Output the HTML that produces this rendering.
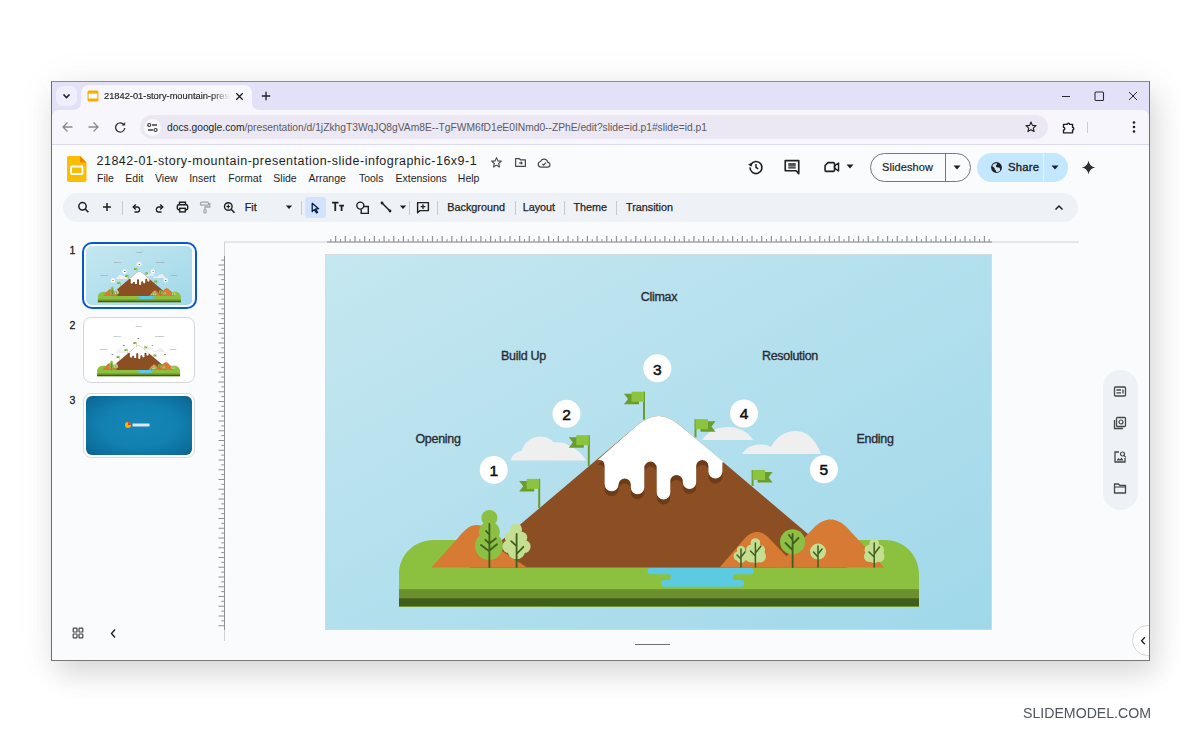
<!DOCTYPE html>
<html><head><meta charset="utf-8">
<style>
*{margin:0;padding:0;box-sizing:border-box}
html,body{width:1200px;height:743px;overflow:hidden;background:#fff;font-family:"Liberation Sans",sans-serif;color:#1f1f1f}
.a{position:absolute}
#win{position:absolute;left:51px;top:81px;width:1099px;height:580px;border:1px solid #8c8c8c;border-left-color:#6c6c6c;border-right-color:#707070;border-bottom-color:#777;background:#f9fbfd;box-shadow:6px 14px 26px rgba(0,0,0,0.11),2px 4px 40px rgba(0,0,0,0.07)}
#tabs{position:absolute;left:0;top:0;width:1097px;height:36px;background:#e2e1f7}
#tb{position:absolute;left:0;top:28px;width:1097px;height:35px;border-top-left-radius:7px;border-top-right-radius:7px;background:#f8f6fd;border-bottom:1px solid #dcd9ea}
.ic{position:absolute}
svg{display:block}
.menu span{position:absolute;top:0;font-size:10.5px;color:#1f1f1f}
.tbar{position:absolute;left:12px;top:112px;width:1015px;height:28px;background:#edf2fa;border-radius:14px}
.tt{position:absolute;font-size:10.5px;color:#444746}
.sep{position:absolute;width:1px;height:14px;background:#c7c9cc}
</style></head><body>
<div id="win">
  <div id="tabs"></div>
  <div id="tb"></div>
</div>
<!-- tab strip -->
<div class="a" style="left:56px;top:86px;width:21px;height:20px;border-radius:7px;background:#efeefc"></div>
<svg class="a" style="left:61px;top:91px" width="11" height="10" viewBox="0 0 11 10"><path d="M2.5,3.5 L5.5,6.5 L8.5,3.5" stroke="#1f1f1f" stroke-width="1.6" fill="none"/></svg>
<div class="a" style="left:81px;top:85px;width:171px;height:25.5px;background:#f8f6fd;border-radius:8px 8px 0 0"></div>
<svg class="a" style="left:73px;top:102px" width="8" height="8" viewBox="0 0 8 8"><path d="M0,8 Q8,8 8,0 V8 Z" fill="#f8f6fd"/></svg>
<svg class="a" style="left:252px;top:102px" width="8" height="8" viewBox="0 0 8 8"><path d="M8,8 Q0,8 0,0 V8 Z" fill="#f8f6fd"/></svg>
<svg class="a" style="left:87px;top:90px" width="12" height="12" viewBox="0 0 12 12"><rect x="0.5" y="0.5" width="11" height="11" rx="1.5" fill="#f9ab00"/><rect x="1.6" y="3.6" width="8.8" height="4.9" fill="#fff"/></svg>
<div class="a" style="left:104px;top:90px;width:126px;height:14px;overflow:hidden;white-space:nowrap;font-size:9.3px;line-height:13px;color:#1f1f1f;-webkit-text-stroke:0.15px #1f1f1f;-webkit-mask-image:linear-gradient(90deg,#000 85%,transparent)">21842-01-story-mountain-presentation</div>
<svg class="a" style="left:235px;top:92px" width="9" height="9" viewBox="0 0 9 9"><path d="M1.3,1.3 L7.7,7.7 M7.7,1.3 L1.3,7.7" stroke="#1f1f1f" stroke-width="1.3"/></svg>
<svg class="a" style="left:261px;top:91px" width="10" height="10" viewBox="0 0 10 10"><path d="M5,0.8 V9.2 M0.8,5 H9.2" stroke="#1f1f1f" stroke-width="1.3"/></svg>
<svg class="a" style="left:1060px;top:90px" width="12" height="12" viewBox="0 0 12 12"><path d="M2,6.5 H10" stroke="#2a2a2a" stroke-width="1"/></svg>
<svg class="a" style="left:1093px;top:90px" width="12" height="12" viewBox="0 0 12 12"><rect x="2" y="2" width="8.5" height="8.5" rx="1" stroke="#2a2a2a" stroke-width="1.05" fill="none"/></svg>
<svg class="a" style="left:1127px;top:90px" width="12" height="12" viewBox="0 0 12 12"><path d="M2,2 L10,10 M10,2 L2,10" stroke="#2a2a2a" stroke-width="1"/></svg>
<!-- toolbar -->
<svg class="a" style="left:61px;top:121px" width="13" height="12" viewBox="0 0 13 12"><path d="M11.5,6 H2 M6.5,1.5 L2,6 L6.5,10.5" stroke="#8a8891" stroke-width="1.3" fill="none"/></svg>
<svg class="a" style="left:87px;top:121px" width="13" height="12" viewBox="0 0 13 12"><path d="M1.5,6 H11 M6.5,1.5 L11,6 L6.5,10.5" stroke="#8a8891" stroke-width="1.3" fill="none"/></svg>
<svg class="a" style="left:114px;top:121px" width="13" height="12" viewBox="0 0 13 12"><path d="M10.2,4.2 A4.6,4.6 0 1 0 10.8,7" stroke="#3c3b41" stroke-width="1.4" fill="none"/><path d="M7.5,4.6 H11.2 V0.9 Z" fill="#3c3b41"/></svg>
<div class="a" style="left:140px;top:115px;width:908px;height:23.7px;border-radius:12px;background:#ebe8f3"></div>
<div class="a" style="left:144px;top:119px;width:17px;height:17px;border-radius:50%;background:#f9f8fc"></div>
<svg class="a" style="left:146px;top:121px" width="13" height="13" viewBox="0 0 13 13"><path d="M6,4 H11 M2,9 H7" stroke="#3c3b41" stroke-width="1.3"/><circle cx="3.2" cy="4" r="1.5" stroke="#3c3b41" stroke-width="1.2" fill="none"/><circle cx="9.6" cy="9" r="1.5" stroke="#3c3b41" stroke-width="1.2" fill="none"/></svg>
<div class="a" style="left:167px;top:120.5px;font-size:10.25px;line-height:14px;white-space:nowrap;color:#5b5962"><span style="color:#1f1f1f">docs.google.com</span>/presentation/d/1jZkhgT3WqJQ8gVAm8E--TgFWM6fD1eE0INmd0--ZPhE/edit?slide=id.p1#slide=id.p1</div>
<svg class="a" style="left:1024px;top:120px" width="14" height="14" viewBox="0 0 24 24"><path d="M12,3.5 L14.4,9.2 L20.6,9.7 L15.9,13.8 L17.3,19.8 L12,16.6 L6.7,19.8 L8.1,13.8 L3.4,9.7 L9.6,9.2 Z" stroke="#1f1f1f" stroke-width="1.9" fill="none" stroke-linejoin="round"/></svg>
<svg class="a" style="left:1061px;top:120px" width="15" height="15" viewBox="0 0 24 24"><path d="M4,7 H9.8 A2,2 0 0 1 13.8,7 H18.5 V11.8 A2,2 0 0 1 18.5,15.8 V20.5 H4 V16 A2.1,2.1 0 0 0 4,11.8 Z" stroke="#1f1f1f" stroke-width="2.2" fill="none" stroke-linejoin="round"/></svg>
<div class="a" style="left:1087px;top:122px;width:1px;height:11px;background:#c9c6f0"></div>
<svg class="a" style="left:1131px;top:120px" width="6" height="14" viewBox="0 0 6 14"><circle cx="3" cy="2.5" r="1.3" fill="#1f1f1f"/><circle cx="3" cy="7" r="1.3" fill="#1f1f1f"/><circle cx="3" cy="11.5" r="1.3" fill="#1f1f1f"/></svg>

<!-- app header -->
<svg class="a" style="left:67px;top:156px" width="20" height="26" viewBox="0 0 20 26"><path d="M2,0 H13 L19.5,6.5 V24 A2,2 0 0 1 17.5,26 H2 A2,2 0 0 1 0,24 V2 A2,2 0 0 1 2,0 Z" fill="#fbbc04"/><path d="M13,0 L19.5,6.5 H13 Z" fill="#ea8600"/><rect x="4" y="10.5" width="11.5" height="7.5" rx="0.8" fill="none" stroke="#fff" stroke-width="1.8"/></svg>
<div class="a" style="left:96.5px;top:153px;font-size:12.5px;line-height:16px;letter-spacing:0.5px;white-space:nowrap;color:#1f1f1f">21842-01-story-mountain-presentation-slide-infographic-16x9-1</div>
<svg class="a" style="left:490px;top:156px" width="13" height="13" viewBox="0 0 24 24"><path d="M12,3 L14.5,9 L21,9.5 L16,13.8 L17.5,20.2 L12,16.8 L6.5,20.2 L8,13.8 L3,9.5 L9.5,9 Z" stroke="#444746" stroke-width="2" fill="none" stroke-linejoin="round"/></svg>
<svg class="a" style="left:513.5px;top:156px" width="13" height="13" viewBox="0 0 24 24"><path d="M3,5 H10 L12,7 H21 V19 H3 Z" stroke="#444746" stroke-width="2.2" fill="none" stroke-linejoin="round"/><path d="M9,13 H15 M12.5,10.5 L15,13 L12.5,15.5" stroke="#444746" stroke-width="2" fill="none"/></svg>
<svg class="a" style="left:537px;top:155.5px" width="14" height="14" viewBox="0 0 24 24"><path d="M7,19 H18 A4,4 0 0 0 18.5,11 A6.5,6.5 0 0 0 6,9.5 A4.8,4.8 0 0 0 7,19 Z" stroke="#444746" stroke-width="2" fill="none"/><path d="M9,13.5 L11.3,15.8 L15.5,11.5" stroke="#444746" stroke-width="2" fill="none"/></svg>
<div class="a menu" style="left:0;top:172px;font-size:10.3px;line-height:13px;color:#1f1f1f">
<span style="left:97px">File</span><span style="left:125.3px">Edit</span><span style="left:155px">View</span><span style="left:189.2px">Insert</span><span style="left:228.3px">Format</span><span style="left:273.3px">Slide</span><span style="left:308.5px">Arrange</span><span style="left:358.9px">Tools</span><span style="left:395.5px">Extensions</span><span style="left:457.8px">Help</span>
</div>
<!-- right header -->
<svg class="a" style="left:747px;top:158px" width="18" height="18" viewBox="0 0 24 24"><path d="M5.2,8.5 A8,8 0 1 1 4,12.5" stroke="#1f1f1f" stroke-width="2.2" fill="none"/><path d="M1.5,8.8 L6,11.5 L7.5,6 Z" fill="#1f1f1f"/><path d="M12,8 V12.5 L15,14.5" stroke="#1f1f1f" stroke-width="2" fill="none"/></svg>
<svg class="a" style="left:783px;top:158px" width="18" height="18" viewBox="0 0 24 24"><path d="M3,3.5 H21 V21 L17.5,17 H3 Z" stroke="#1f1f1f" stroke-width="2.2" fill="none" stroke-linejoin="round"/><path d="M7,8 H17 M7,10.6 H17 M7,13.2 H17" stroke="#1f1f1f" stroke-width="1.7"/></svg>
<svg class="a" style="left:823px;top:159px" width="18" height="16" viewBox="0 0 24 22"><path d="M6.5,5 H14 A1.5,1.5 0 0 1 15.5,6.5 V15.5 A1.5,1.5 0 0 1 14,17 H4 A1.5,1.5 0 0 1 2.5,15.5 V9 Z" stroke="#1f1f1f" stroke-width="2.2" fill="none" stroke-linejoin="round"/><path d="M15.5,9.5 L21,5.5 V16.5 L15.5,12.5 Z" stroke="#1f1f1f" stroke-width="2" fill="none" stroke-linejoin="round"/></svg>
<svg class="a" style="left:846px;top:164px" width="8" height="5" viewBox="0 0 8 5"><path d="M0.5,0.5 H7.5 L4,4.5 Z" fill="#1f1f1f"/></svg>
<div class="a" style="left:870px;top:153px;width:101px;height:29px;border:1px solid #747775;border-radius:15px"></div>
<div class="a" style="left:944.5px;top:153px;width:1px;height:29px;background:#747775"></div>
<div class="a" style="left:882px;top:160px;font-size:11px;line-height:14px;color:#1f1f1f;letter-spacing:0.1px;-webkit-text-stroke:0.2px #1f1f1f">Slideshow</div>
<svg class="a" style="left:953px;top:165px" width="8" height="5" viewBox="0 0 8 5"><path d="M0.5,0.5 H7.5 L4,4.5 Z" fill="#1f1f1f"/></svg>
<div class="a" style="left:977px;top:153px;width:91px;height:29px;background:#c2e7ff;border-radius:15px"></div>
<div class="a" style="left:1043px;top:153px;width:1px;height:29px;background:#e6f4ff"></div>
<svg class="a" style="left:990px;top:161px" width="13" height="13" viewBox="0 0 24 24"><circle cx="12" cy="12" r="10" fill="#1f1f1f"/><path d="M11,20 V17.5 L8.5,15 V13 L4,9 A8,8 0 0 1 13,4.2 V6.5 L11,8 V10.5 L14,12 H17 L18.5,14.5 V18 A8,8 0 0 1 11,20 Z" fill="#c2e7ff"/></svg>
<div class="a" style="left:1008px;top:159.5px;font-size:11.3px;line-height:14px;color:#1f1f1f;letter-spacing:0.2px;-webkit-text-stroke:0.35px #1f1f1f">Share</div>
<svg class="a" style="left:1051px;top:165px" width="8" height="5" viewBox="0 0 8 5"><path d="M0.5,0.5 H7.5 L4,4.5 Z" fill="#1f1f1f"/></svg>
<svg class="a" style="left:1080px;top:159px" width="17" height="17" viewBox="0 0 24 24"><path d="M12,2.5 C13,8 16,11 21.5,12 C16,13 13,16 12,21.5 C11,16 8,13 2.5,12 C8,11 11,8 12,2.5 Z" fill="#2d2f33"/></svg>
<!-- toolbar -->
<div class="a" style="left:63px;top:193px;width:1015px;height:29px;background:#eef2f7;border-radius:14.5px"></div>

<svg class="a" style="left:77px;top:201px" width="13" height="13" viewBox="0 0 13 13"><circle cx="5.5" cy="5.3" r="3.7" stroke="#1f1f1f" stroke-width="1.5" fill="none"/><path d="M8.2,8 L11.4,11.2" stroke="#1f1f1f" stroke-width="1.6"/></svg>
<svg class="a" style="left:101px;top:201px" width="12" height="12" viewBox="0 0 12 12"><path d="M6,2 V10 M2,6 H10" stroke="#1f1f1f" stroke-width="1.5"/></svg>
<div class="sep" style="left:122px;top:201px"></div>
<svg class="a" style="left:131px;top:202px" width="11" height="11" viewBox="0 0 11 11"><path d="M2.5,5 H6.8 A2.6,2.6 0 0 1 6.8,10 H3.5" stroke="#1f1f1f" stroke-width="1.4" fill="none"/><path d="M4.8,2.5 L2.2,5 L4.8,7.5" stroke="#1f1f1f" stroke-width="1.4" fill="none"/></svg>
<svg class="a" style="left:154px;top:202px" width="11" height="11" viewBox="0 0 11 11"><path d="M8.5,5 H4.2 A2.6,2.6 0 0 0 4.2,10 H7.5" stroke="#1f1f1f" stroke-width="1.4" fill="none"/><path d="M6.2,2.5 L8.8,5 L6.2,7.5" stroke="#1f1f1f" stroke-width="1.4" fill="none"/></svg>
<svg class="a" style="left:176px;top:201px" width="13" height="12" viewBox="0 0 13 12"><path d="M3.5,3.5 V1.2 H9.5 V3.5" stroke="#1f1f1f" stroke-width="1.4" fill="none"/><rect x="1.3" y="3.7" width="10.4" height="5" rx="1.5" stroke="#1f1f1f" stroke-width="1.4" fill="none"/><rect x="3.7" y="7.3" width="5.6" height="3.6" stroke="#1f1f1f" stroke-width="1.4" fill="#edf2fa"/></svg>
<svg class="a" style="left:199px;top:200.5px" width="12" height="13" viewBox="0 0 12 13"><rect x="1.5" y="1.2" width="8" height="3" rx="1" stroke="#a3a5a8" stroke-width="1.3" fill="none"/><path d="M9.5,2.7 H10.8 V6 H6 V8.5" stroke="#a3a5a8" stroke-width="1.3" fill="none"/><rect x="4.9" y="8.5" width="2.2" height="3.6" rx="1" stroke="#a3a5a8" stroke-width="1.2" fill="none"/></svg>
<svg class="a" style="left:222.5px;top:200.5px" width="13" height="13" viewBox="0 0 13 13"><circle cx="5.3" cy="5.5" r="3.8" stroke="#1f1f1f" stroke-width="1.4" fill="none"/><path d="M8.1,8.3 L11.5,11.7" stroke="#1f1f1f" stroke-width="1.6"/><path d="M5.3,3.6 V7.4 M3.4,5.5 H7.2" stroke="#1f1f1f" stroke-width="1.2"/></svg>
<div class="a" style="left:244.7px;top:201px;font-size:10.8px;line-height:13px;color:#1f1f1f;-webkit-text-stroke:0.25px #1f1f1f">Fit</div>
<svg class="a" style="left:285px;top:205px" width="8" height="5" viewBox="0 0 8 5"><path d="M0.8,0.5 H7.2 L4,4 Z" fill="#1f1f1f"/></svg>
<div class="sep" style="left:301px;top:201px"></div>
<div class="a" style="left:304.7px;top:196.8px;width:21.6px;height:21px;border-radius:3px;background:#d3e3fd"></div>
<svg class="a" style="left:310px;top:201.5px" width="11" height="12" viewBox="0 0 11 12"><path d="M2.2,1.3 L2.2,9.6 L4.4,7.6 L6.5,11 L7.6,10.3 L5.6,7 L8.6,6.7 Z" stroke="#041e49" stroke-width="1.3" fill="none" stroke-linejoin="round"/></svg>
<svg class="a" style="left:331px;top:201px" width="14" height="11" viewBox="0 0 14 11"><path d="M1,1.6 H7.5 M4.25,1.6 V10 M8.2,4.6 H13 M10.6,4.6 V10" stroke="#1f1f1f" stroke-width="1.8"/></svg>
<svg class="a" style="left:355px;top:201px" width="15" height="14" viewBox="0 0 15 14"><circle cx="5.3" cy="4.6" r="3.5" stroke="#1f1f1f" stroke-width="1.4" fill="none"/><path d="M8.6,5.5 H13.3 V12.4 H6.2 V8.2" stroke="#1f1f1f" stroke-width="1.4" fill="none"/></svg>
<svg class="a" style="left:380px;top:201px" width="12" height="12" viewBox="0 0 12 12"><path d="M2,2 L10,10" stroke="#1f1f1f" stroke-width="1.6"/><circle cx="2" cy="2" r="1.4" fill="#1f1f1f"/><circle cx="10" cy="10" r="1.4" fill="#1f1f1f"/></svg>
<svg class="a" style="left:398.5px;top:205px" width="8" height="5" viewBox="0 0 8 5"><path d="M0.8,0.5 H7.2 L4,4 Z" fill="#1f1f1f"/></svg>
<div class="sep" style="left:409px;top:201px"></div>
<svg class="a" style="left:416px;top:201px" width="14" height="13" viewBox="0 0 14 13"><path d="M1.6,1.6 H12.4 V9.6 H4 L1.6,11.8 Z" stroke="#1f1f1f" stroke-width="1.4" fill="none" stroke-linejoin="round"/><path d="M7,3.3 V8 M4.6,5.6 H9.4" stroke="#1f1f1f" stroke-width="1.3"/></svg>
<div class="sep" style="left:437px;top:201px"></div>
<div class="a" style="left:447.3px;top:201px;font-size:10.8px;line-height:13px;color:#1f1f1f;-webkit-text-stroke:0.25px #1f1f1f">Background</div>
<div class="sep" style="left:515px;top:201px"></div>
<div class="a" style="left:522.7px;top:201px;font-size:10.8px;line-height:13px;color:#1f1f1f;-webkit-text-stroke:0.25px #1f1f1f">Layout</div>
<div class="sep" style="left:563.5px;top:201px"></div>
<div class="a" style="left:573.4px;top:201px;font-size:10.8px;line-height:13px;color:#1f1f1f;-webkit-text-stroke:0.25px #1f1f1f">Theme</div>
<div class="sep" style="left:616px;top:201px"></div>
<div class="a" style="left:626px;top:201px;font-size:10.8px;line-height:13px;color:#1f1f1f;-webkit-text-stroke:0.25px #1f1f1f">Transition</div>
<svg class="a" style="left:1054px;top:204px" width="10" height="7" viewBox="0 0 10 7"><path d="M1.5,5.5 L5,2 L8.5,5.5" stroke="#1f1f1f" stroke-width="1.5" fill="none"/></svg>

<!-- filmstrip -->
<div class="a" style="left:69.5px;top:244px;font-size:10.5px;line-height:13px;color:#1f1f1f;-webkit-text-stroke:0.3px #1f1f1f">1</div>
<div class="a" style="left:69.5px;top:319px;font-size:10.5px;line-height:13px;color:#1f1f1f;-webkit-text-stroke:0.3px #1f1f1f">2</div>
<div class="a" style="left:69.5px;top:394px;font-size:10.5px;line-height:13px;color:#1f1f1f;-webkit-text-stroke:0.3px #1f1f1f">3</div>
<div class="a" style="left:81.5px;top:241.5px;width:115px;height:67.5px;border:2.5px solid #0b57d0;border-radius:10px"></div>
<div class="a" style="left:82.8px;top:317.3px;width:112.4px;height:65.5px;border:1px solid #d5d7da;border-radius:8px;background:#fff"></div>
<div class="a" style="left:83px;top:393px;width:112px;height:64.5px;border:1px solid #dadce0;border-radius:8px;background:#fff"></div>
<div class="a" style="left:85.7px;top:395.7px;width:106.8px;height:59.5px;border-radius:6px;background:radial-gradient(ellipse at 50% 50%,#1486b6 0%,#1181b1 50%,#0d6d9b 85%,#0a5f8a 100%)"></div>
<svg class="a" style="left:124px;top:420px" width="30" height="10" viewBox="0 0 30 10"><circle cx="4" cy="5" r="3" fill="#f5b400"/><path d="M4,2 A3,3 0 0 1 7,5 H4 Z" fill="#e0452f"/><rect x="8.5" y="3.5" width="17" height="3" fill="#dbe8f0"/></svg>
<!-- bottom-left icons -->
<svg class="a" style="left:72px;top:627px" width="12" height="12" viewBox="0 0 12 12"><rect x="1.2" y="1.2" width="3.8" height="3.8" rx="0.6" stroke="#444746" stroke-width="1.2" fill="none"/><rect x="7" y="1.2" width="3.8" height="3.8" rx="0.6" stroke="#444746" stroke-width="1.2" fill="none"/><rect x="1.2" y="7" width="3.8" height="3.8" rx="0.6" stroke="#444746" stroke-width="1.2" fill="none"/><rect x="7" y="7" width="3.8" height="3.8" rx="0.6" stroke="#444746" stroke-width="1.2" fill="none"/></svg>
<svg class="a" style="left:109px;top:628px" width="9" height="11" viewBox="0 0 9 11"><path d="M6,1.5 L2.5,5.5 L6,9.5" stroke="#1f1f1f" stroke-width="1.4" fill="none"/></svg>
<!-- notes handle -->
<div class="a" style="left:635px;top:643.5px;width:35px;height:1px;background:#6f7175"></div>
<!-- side panel -->
<div class="a" style="left:1103px;top:370px;width:35px;height:140px;border-radius:17.5px;background:#eef1f6"></div>
<svg class="a" style="left:1113px;top:385px" width="14" height="13" viewBox="0 0 14 13"><rect x="1.5" y="2" width="11" height="9" rx="1" stroke="#444746" stroke-width="1.3" fill="none"/><path d="M3.5,5 H8 M3.5,7.8 H8 M10,4.5 V8.5" stroke="#444746" stroke-width="1.3"/></svg>
<svg class="a" style="left:1113px;top:416px" width="14" height="14" viewBox="0 0 14 14"><rect x="3.5" y="1.5" width="9" height="9" rx="1" stroke="#444746" stroke-width="1.3" fill="none"/><path d="M1.5,4 V12.5 H10" stroke="#444746" stroke-width="1.3" fill="none"/><circle cx="8" cy="6" r="2" stroke="#444746" stroke-width="1.2" fill="none"/></svg>
<svg class="a" style="left:1113px;top:450px" width="14" height="14" viewBox="0 0 14 14"><path d="M6,2 H2 V12 H12 V8" stroke="#444746" stroke-width="1.3" fill="none"/><path d="M3.5,10.5 L5.5,8 L7,9.5 L8.5,7.5 L10.5,10.5 Z" fill="#444746"/><circle cx="9.5" cy="4" r="2" stroke="#444746" stroke-width="1.2" fill="none"/><path d="M11,5.5 L12.8,7.3" stroke="#444746" stroke-width="1.2"/></svg>
<svg class="a" style="left:1113px;top:482px" width="14" height="13" viewBox="0 0 14 13"><path d="M1.5,2 H5.5 L7,3.5 H12.5 V11 H1.5 Z" stroke="#444746" stroke-width="1.3" fill="none" stroke-linejoin="round"/><path d="M1.5,5 H12.5" stroke="#444746" stroke-width="1.1"/></svg>
<div class="a" style="left:1120px;top:620px;width:29px;height:40px;overflow:hidden"><div class="a" style="left:11.5px;top:4.8px;width:31px;height:31px;border-radius:50%;background:#fff;border:1px solid #d5d7db"></div></div>
<svg class="a" style="left:1138.5px;top:636px" width="8" height="10" viewBox="0 0 8 10"><path d="M5.8,1.3 L2.6,4.8 L5.8,8.3" stroke="#1f1f1f" stroke-width="1.3" fill="none"/></svg>

<svg class="a" style="left:0;top:0" width="1200" height="743" viewBox="0 0 1200 743">
<path d="M224,242 H1079 M224.5,242 V641" stroke="#d0d2d6" stroke-width="1"/>
<path d="M327,242 H992 M224.5,256 V630" stroke="#8e9196" stroke-width="1"/>
<path d="M330.80,239 V242 M340.48,239 V242 M350.17,239 V242 M359.85,239 V242 M369.53,239 V242 M379.22,239 V242 M388.90,239 V242 M398.58,239 V242 M408.26,239 V242 M417.95,239 V242 M427.63,239 V242 M437.31,239 V242 M447.00,239 V242 M456.68,239 V242 M466.36,239 V242 M476.05,239 V242 M485.73,239 V242 M495.41,239 V242 M505.09,239 V242 M514.78,239 V242 M524.46,239 V242 M534.14,239 V242 M543.83,239 V242 M553.51,239 V242 M563.19,239 V242 M572.88,239 V242 M582.56,239 V242 M592.24,239 V242 M601.92,239 V242 M611.61,239 V242 M621.29,239 V242 M630.97,239 V242 M640.66,239 V242 M650.34,239 V242 M660.02,239 V242 M669.70,239 V242 M679.39,239 V242 M689.07,239 V242 M698.75,239 V242 M708.44,239 V242 M718.12,239 V242 M727.80,239 V242 M737.49,239 V242 M747.17,239 V242 M756.85,239 V242 M766.54,239 V242 M776.22,239 V242 M785.90,239 V242 M795.58,239 V242 M805.27,239 V242 M814.95,239 V242 M824.63,239 V242 M834.32,239 V242 M844.00,239 V242 M853.68,239 V242 M863.37,239 V242 M873.05,239 V242 M882.73,239 V242 M892.41,239 V242 M902.10,239 V242 M911.78,239 V242 M921.46,239 V242 M931.15,239 V242 M940.83,239 V242 M950.51,239 V242 M960.19,239 V242 M969.88,239 V242 M979.56,239 V242 M989.24,239 V242 M221.3,260.10 H224.5 M221.3,269.85 H224.5 M221.3,279.60 H224.5 M221.3,289.35 H224.5 M221.3,299.10 H224.5 M221.3,308.85 H224.5 M221.3,318.60 H224.5 M221.3,328.35 H224.5 M221.3,338.10 H224.5 M221.3,347.85 H224.5 M221.3,357.60 H224.5 M221.3,367.35 H224.5 M221.3,377.10 H224.5 M221.3,386.85 H224.5 M221.3,396.60 H224.5 M221.3,406.35 H224.5 M221.3,416.10 H224.5 M221.3,425.85 H224.5 M221.3,435.60 H224.5 M221.3,445.35 H224.5 M221.3,455.10 H224.5 M221.3,464.85 H224.5 M221.3,474.60 H224.5 M221.3,484.35 H224.5 M221.3,494.10 H224.5 M221.3,503.85 H224.5 M221.3,513.60 H224.5 M221.3,523.35 H224.5 M221.3,533.10 H224.5 M221.3,542.85 H224.5 M221.3,552.60 H224.5 M221.3,562.35 H224.5 M221.3,572.10 H224.5 M221.3,581.85 H224.5 M221.3,591.60 H224.5 M221.3,601.35 H224.5 M221.3,611.10 H224.5 M221.3,620.85 H224.5" stroke="#8e9196" stroke-width="1"/>
<path d="M335.64,236 V242 M345.32,236 V242 M355.01,236 V242 M364.69,236 V242 M374.37,236 V242 M384.06,236 V242 M393.74,236 V242 M403.42,236 V242 M413.11,236 V242 M422.79,236 V242 M432.47,236 V242 M442.15,236 V242 M451.84,236 V242 M461.52,236 V242 M471.20,236 V242 M480.89,236 V242 M490.57,236 V242 M500.25,236 V242 M509.94,236 V242 M519.62,236 V242 M529.30,236 V242 M538.98,236 V242 M548.67,236 V242 M558.35,236 V242 M568.03,236 V242 M577.72,236 V242 M587.40,236 V242 M597.08,236 V242 M606.77,236 V242 M616.45,236 V242 M626.13,236 V242 M635.81,236 V242 M645.50,236 V242 M655.18,236 V242 M664.86,236 V242 M674.55,236 V242 M684.23,236 V242 M693.91,236 V242 M703.60,236 V242 M713.28,236 V242 M722.96,236 V242 M732.64,236 V242 M742.33,236 V242 M752.01,236 V242 M761.69,236 V242 M771.38,236 V242 M781.06,236 V242 M790.74,236 V242 M800.43,236 V242 M810.11,236 V242 M819.79,236 V242 M829.47,236 V242 M839.16,236 V242 M848.84,236 V242 M858.52,236 V242 M868.21,236 V242 M877.89,236 V242 M887.57,236 V242 M897.26,236 V242 M906.94,236 V242 M916.62,236 V242 M926.30,236 V242 M935.99,236 V242 M945.67,236 V242 M955.35,236 V242 M965.04,236 V242 M974.72,236 V242 M984.40,236 V242 M218.5,264.98 H224.5 M218.5,274.73 H224.5 M218.5,284.48 H224.5 M218.5,294.23 H224.5 M218.5,303.98 H224.5 M218.5,313.73 H224.5 M218.5,323.48 H224.5 M218.5,333.23 H224.5 M218.5,342.98 H224.5 M218.5,352.73 H224.5 M218.5,362.48 H224.5 M218.5,372.23 H224.5 M218.5,381.98 H224.5 M218.5,391.73 H224.5 M218.5,401.48 H224.5 M218.5,411.23 H224.5 M218.5,420.98 H224.5 M218.5,430.73 H224.5 M218.5,440.48 H224.5 M218.5,450.23 H224.5 M218.5,459.98 H224.5 M218.5,469.73 H224.5 M218.5,479.48 H224.5 M218.5,489.23 H224.5 M218.5,498.98 H224.5 M218.5,508.73 H224.5 M218.5,518.48 H224.5 M218.5,528.23 H224.5 M218.5,537.98 H224.5 M218.5,547.73 H224.5 M218.5,557.48 H224.5 M218.5,567.23 H224.5 M218.5,576.98 H224.5 M218.5,586.73 H224.5 M218.5,596.48 H224.5 M218.5,606.23 H224.5 M218.5,615.98 H224.5 M218.5,625.73 H224.5" stroke="#8e9196" stroke-width="1.2"/>
</svg>
<svg class="a" style="left:325px;top:254px" width="667" height="376" viewBox="325 254 667 376">
<defs>
<linearGradient id="sky" x1="0" y1="0" x2="1" y2="1">
<stop offset="0" stop-color="#c5e7f0"/><stop offset="1" stop-color="#a0d8ea"/>
</linearGradient>
<symbol id="mt" viewBox="325 254 667 376">
<!-- clouds -->
<path d="M510.4,460.5 C512.5,454.5 516,451.5 521.5,451 C524,443 531,436.5 540,436.5 C547,436.5 551,439.5 554,442.5 C558,442 565.5,442 569.5,446 C576,449 582,453 586,460.5 Z" fill="#efefef"/>
<path d="M702,440 C708,431 717,427 728,427 C740,427 749,433 753,440 Z" fill="#efefef"/>
<path d="M742,454 C746,448 752,444.5 759,444.5 C765,444.5 768.5,445.5 771,447 C776,437 785,431 796,431 C808,431 817,442 821,454 Z" fill="#efefef"/>
<!-- ground -->
<path d="M399,607 V574 C399,555 414,540 434,540 H520 V567 H830 V540 H885 C904,540 919,555 919,574 V607 Z" fill="#8bc13f"/>
<rect x="399" y="589.2" width="520" height="9" fill="#6b902d"/>
<rect x="399" y="598.2" width="520" height="8.2" fill="#415d1c"/>
<!-- mountain -->
<path d="M469.5,567.5 L634,428 C652,412 665,412 683,428 L847.5,567.5 Z" fill="#8c4f23"/>
<!-- snow shadow -->
<g id="snowp"></g>
<path transform="translate(0,5)" d="M597,460.5 L634,428 C652,412 665,412 683,428 L723.6,462 L722.4,462.5 L722.4,471.5 A7,7 0 0 1 708.4,471.5 L708.4,466 A6.1,6.1 0 0 0 696.2,466 L696.2,482.3 A6.7,6.7 0 0 1 682.8,482.3 L682.8,481.25 A6.25,6.25 0 0 0 670.3,481.25 L670.3,492.7 A6.8,6.8 0 0 1 656.7,492.7 L656.7,467.8 A6.2,6.2 0 0 0 644.3,467.8 L644.3,487.5 A6.75,6.75 0 0 1 630.8,487.5 L630.8,484.6 A6.1,6.1 0 0 0 618.6,484.6 L618.6,484.3 A7,7 0 0 1 604.6,484.3 L604.6,466 Q604.6,459.8 598.5,459.8 Z" fill="#6d3b17"/>
<path d="M597,460.5 L634,428 C652,412 665,412 683,428 L723.6,462 L722.4,462.5 L722.4,471.5 A7,7 0 0 1 708.4,471.5 L708.4,466 A6.1,6.1 0 0 0 696.2,466 L696.2,482.3 A6.7,6.7 0 0 1 682.8,482.3 L682.8,481.25 A6.25,6.25 0 0 0 670.3,481.25 L670.3,492.7 A6.8,6.8 0 0 1 656.7,492.7 L656.7,467.8 A6.2,6.2 0 0 0 644.3,467.8 L644.3,487.5 A6.75,6.75 0 0 1 630.8,487.5 L630.8,484.6 A6.1,6.1 0 0 0 618.6,484.6 L618.6,484.3 A7,7 0 0 1 604.6,484.3 L604.6,466 Q604.6,459.8 598.5,459.8 Z" fill="#ffffff"/>
<!-- orange hills -->
<path d="M431.4,567.5 L458,538 C465,529 470,525 477,525 C487,525 492,535 501.6,550.8 L527,567.5 Z" fill="#d77a33"/>
<path d="M719.5,567.5 L746,537 C750,533.5 753,532 757,532 C761,532 764,533.5 768,537 L797,567.5 Z" fill="#d77a33"/>
<path d="M776,567.5 L815,526.5 C821,521.5 825,519.5 830.5,519.5 C836,519.5 840,521.5 846,526.5 L884,567.5 Z" fill="#d77a33"/>
<!-- lake -->
<path d="M650.5,568 H750.5 A3.15,3.15 0 0 1 750.5,574.3 H735.55 A2.85,2.85 0 0 0 735.55,580 H740.8 A3.35,3.35 0 0 1 740.8,586.7 H664.3 A3.35,3.35 0 0 1 664.3,580 H667.95 A2.85,2.85 0 0 0 667.95,574.3 H650.5 A3.15,3.15 0 0 1 650.5,568 Z" fill="#5ccae1"/>
<!-- trees -->
<g fill="#8cc044">
<circle cx="489.4" cy="518" r="8"/><circle cx="489.4" cy="532" r="10.5"/><circle cx="489" cy="546" r="14"/>
<circle cx="792.6" cy="541.8" r="12.6"/>
</g>
<g fill="#c4df92">
<circle cx="516" cy="529.5" r="6"/><circle cx="510.5" cy="537.5" r="5.8"/><circle cx="521.5" cy="537.5" r="5.8"/><circle cx="509" cy="546.5" r="6.6"/><circle cx="524" cy="546.5" r="6.6"/><circle cx="516.4" cy="550.5" r="8.8"/><rect x="509" y="532" width="14" height="12" />
<circle cx="818" cy="551.6" r="8"/>
<circle cx="741" cy="550" r="4"/><circle cx="738" cy="556" r="4.5"/><circle cx="744.5" cy="556" r="4.5"/><circle cx="741" cy="558.5" r="4.5"/>
<circle cx="755.4" cy="543" r="4.8"/><circle cx="751.5" cy="550" r="5.5"/><circle cx="759.5" cy="550" r="5.5"/><circle cx="751" cy="556.5" r="6"/><circle cx="760" cy="556.5" r="6"/><circle cx="755.4" cy="557.5" r="5.5"/>
<circle cx="874.2" cy="543.5" r="4.8"/><circle cx="870" cy="550" r="5.5"/><circle cx="878.5" cy="550" r="5.5"/><circle cx="869.5" cy="556.5" r="5.5"/><circle cx="879" cy="556.5" r="5.5"/><circle cx="874.2" cy="557.5" r="5.5"/>
</g>
<g stroke="#3f5e20" stroke-width="1.8" fill="none" stroke-linecap="round">
<path d="M489.4,524 V567 M486,531 L489.4,534.7 M485.4,539.8 L489.4,543.5 M495.8,538.5 L489.4,543.5 M481,545 L489.4,551.4 M497,544.2 L489.4,550.5"/>
<path d="M516.6,534 V567 M511.2,541.2 L516.6,546.1 M523.4,546.8 L516.6,554"/>
<path d="M792.6,534 V567 M792.6,550 L785.5,543 M792.6,544 L798.5,538 M792.6,540 L789,535"/>
<g stroke-width="1.5"><path d="M818,546 V567 M818,557 L813.5,552 M818,554 L822,549"/>
<path d="M741,549 V567 M741,559 L737,555 M741,557 L745,552"/>
<path d="M755.4,543 V567 M755.4,556 L750.5,551 M755.4,553 L761,546"/>
<path d="M874.2,543 V567 M874.2,557 L869,552 M874.2,554 L879.5,547"/></g>
</g>
<!-- flags -->
<g id="flags">
<g transform="translate(539.2,478.9)"><rect x="-1" y="0" width="2" height="29" fill="#6c9c2e"/><path d="M-20,2 H-5 V12.5 H-20 L-16,7.25 Z" fill="#6a9d2c"/><rect x="-12.5" y="0" width="12.5" height="10" fill="#8cc43f"/></g>
<g transform="translate(588.8,435.2)"><rect x="-1" y="0" width="2" height="31" fill="#6c9c2e"/><path d="M-20,2 H-5 V12.5 H-20 L-16,7.25 Z" fill="#6a9d2c"/><rect x="-12.5" y="0" width="12.5" height="10" fill="#8cc43f"/></g>
<g transform="translate(644,391.7)"><rect x="-1" y="0" width="2" height="28" fill="#6c9c2e"/><path d="M-20,2 H-5 V12.5 H-20 L-16,7.25 Z" fill="#6a9d2c"/><rect x="-12.5" y="0" width="12.5" height="10" fill="#8cc43f"/></g>
<g transform="translate(695.5,419.2) scale(-1,1)"><rect x="-1" y="0" width="2" height="18" fill="#6c9c2e"/><path d="M-20,2 H-5 V12.5 H-20 L-16,7.25 Z" fill="#6a9d2c"/><rect x="-12.5" y="0" width="12.5" height="10" fill="#8cc43f"/></g>
<g transform="translate(752.6,470) scale(-1,1)"><rect x="-1" y="0" width="2" height="16" fill="#6c9c2e"/><path d="M-20,2 H-5 V12.5 H-20 L-16,7.25 Z" fill="#6a9d2c"/><rect x="-12.5" y="0" width="12.5" height="10" fill="#8cc43f"/></g>
</g>
<!-- number circles -->
<g fill="#fff">
<circle cx="493.7" cy="469.9" r="14"/><circle cx="566.5" cy="413.8" r="14"/><circle cx="657.3" cy="368.3" r="14"/><circle cx="744" cy="413.5" r="14"/><circle cx="823.9" cy="469.3" r="14"/>
</g>
<g font-family="Liberation Sans" font-size="15.5" fill="#111" stroke="#111" stroke-width="0.55" text-anchor="middle">
<text x="493.7" y="475.6">1</text><text x="566.5" y="419.5">2</text><text x="657.3" y="374.9">3</text><text x="744" y="419.2">4</text><text x="823.9" y="475">5</text>
</g>
<g font-family="Liberation Sans" font-size="12.5" fill="currentColor" stroke="currentColor" stroke-width="0.35" letter-spacing="-0.3" text-anchor="middle">
<text x="659" y="301">Climax</text><text x="523.5" y="359.5">Build Up</text><text x="790" y="359.5">Resolution</text><text x="438" y="442.5">Opening</text><text x="875" y="442.5">Ending</text>
</g>
</symbol>
</defs>
<rect x="325" y="254" width="667" height="376" fill="url(#sky)"/>
<use href="#mt" x="325" y="254" width="667" height="376" style="color:#2b2c33"/>
<rect x="325.5" y="254.5" width="666" height="375" fill="none" stroke="#d6dadf" stroke-width="1" opacity="0.8"/>
</svg>
<svg class="a" style="left:85.6px;top:245.6px" width="106.6" height="59" viewBox="0 0 106.6 59"><defs><clipPath id="c1"><rect width="106.6" height="59" rx="6"/></clipPath></defs><g clip-path="url(#c1)"><rect width="106.6" height="59" fill="url(#sky)"/><use href="#mt" x="0" y="0" width="106.6" height="60" style="color:#9aa2a8"/></g></svg>
<svg class="a" style="left:84.8px;top:320px" width="107" height="60" viewBox="0 0 107 60"><use href="#mt" x="0" y="0" width="107" height="60" style="color:#a0a4a8"/></svg>


<div class="a" style="left:1023px;top:704px;font-size:15.5px;line-height:18px;color:#50555b;white-space:nowrap;transform:scaleX(0.912);transform-origin:0 0">SLIDEMODEL.COM</div>
</body></html>
